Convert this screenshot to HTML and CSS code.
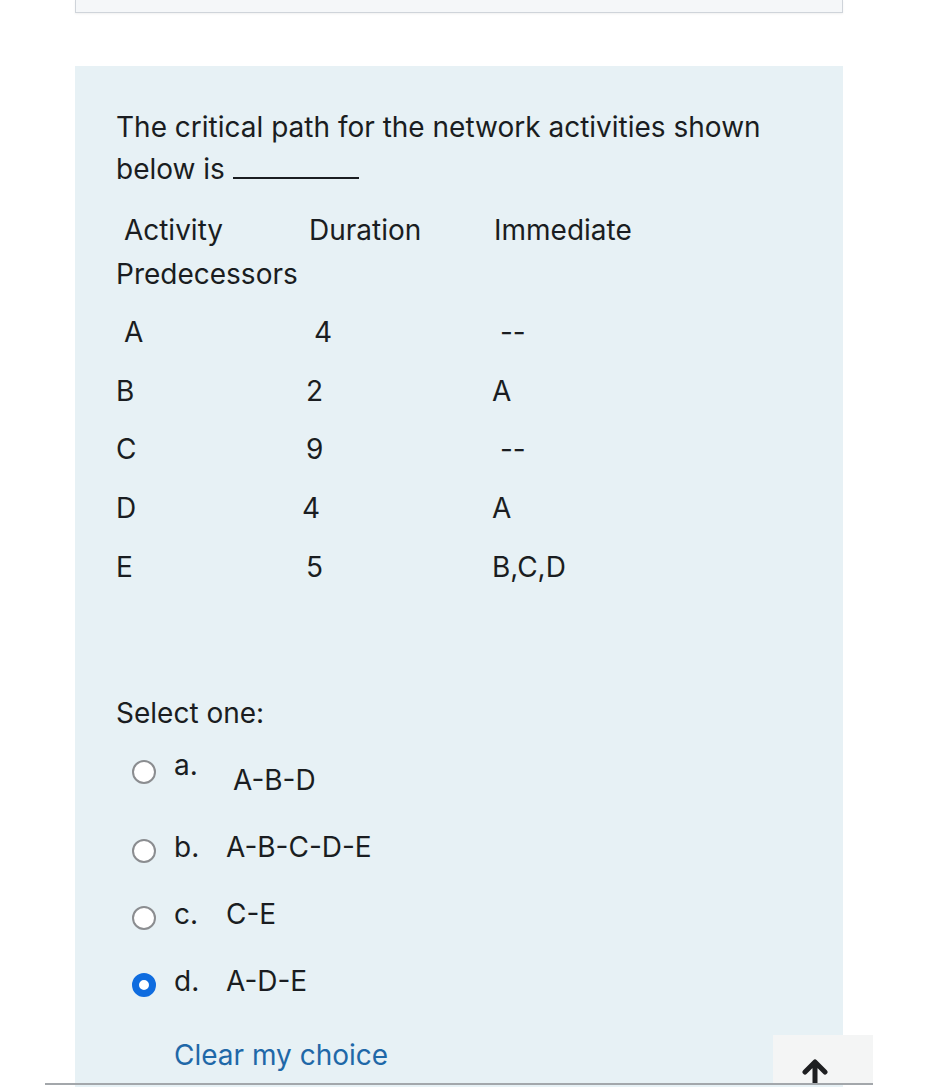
FILE: index.html
```html
<!DOCTYPE html>
<html lang="en">
<head>
    <meta charset="UTF-8">
    <meta name="viewport" content="width=device-width, initial-scale=1.0">
    <title>Quiz question</title>
    <link rel="stylesheet" href="styles.css">
</head>
<body>

    <div class="prev-card"></div>

    <div class="question">
        <p class="qtext">The critical path for the network activities shown below is <span class="blank"></span></p>

        <div class="table-head">
            <span class="col">&nbsp;Activity</span>
            <span class="col col-2">Duration</span>
            <span class="col col-3">Immediate</span>
        </div>
        <div class="table-head-wrap">Predecessors</div>

        <div class="table">
            <span>&nbsp;A</span><span class="num">&nbsp;4</span><span>&nbsp;--</span>
            <span>B</span><span class="num">2</span><span>A</span>
            <span>C</span><span class="num">9</span><span>&nbsp;--</span>
            <span>D</span><span>4</span><span>A</span>
            <span>E</span><span class="num">5</span><span>B,C,D</span>
        </div>

        <div class="prompt">Select one:</div>

        <div class="answers">
            <label class="option option-para">
                <span class="radio"></span>
                <span class="letter">a.</span>
                <span class="answer-text answer-para">A-B-D</span>
            </label>
            <label class="option">
                <span class="radio"></span>
                <span class="letter">b.</span>
                <span class="answer-text">A-B-C-D-E</span>
            </label>
            <label class="option">
                <span class="radio"></span>
                <span class="letter">c.</span>
                <span class="answer-text">C-E</span>
            </label>
            <label class="option">
                <span class="radio checked"></span>
                <span class="letter">d.</span>
                <span class="answer-text">A-D-E</span>
            </label>
        </div>

        <a class="clear-choice" href="#">Clear my choice</a>
    </div>

    <div class="bottom-rule"></div>
    <div class="back-to-top">
        <svg width="30" height="30" viewBox="0 0 30 30">
            <path d="M15 28 V6 M5 15 L15 5 L25 15" fill="none" stroke="#1e1f21" stroke-width="5" stroke-linecap="round" stroke-linejoin="round"/>
        </svg>
    </div>

</body>
</html>
```

FILE: styles.css
```css
body {
    margin: 0;
    background: #ffffff;
    font-family: Inter, "Noto Sans", sans-serif;
    font-size: 28px;
    color: #1a1d21;
    overflow: hidden;
}

.prev-card {
    width: 768px;
    height: 13px;
    margin-left: 75px;
    box-sizing: border-box;
    background: #f5f7f9;
    border: 1px solid #cfd4da;
    border-top: none;
    box-shadow: 0 1px 2px rgba(0, 0, 0, 0.06);
}

.question {
    width: 768px;
    margin: 53px 0 0 75px;
    box-sizing: border-box;
    padding: 41px 41px 80px;
    background: #e7f1f5;
}

.qtext {
    margin: 0;
    line-height: 41.6px;
    width: 670px;
}

.blank {
    display: inline-block;
    width: 126px;
    border-bottom: 2px solid #1a1d21;
    vertical-align: baseline;
}

.table-head {
    display: grid;
    grid-template-columns: 186px 190px auto;
    margin-top: 18px;
    line-height: 44px;
}

.table-head .col-2 {
    padding-left: 7px;
}

.table-head .col-3 {
    padding-left: 2px;
}

.table-head-wrap {
    line-height: 44px;
}

.table {
    display: grid;
    grid-template-columns: 186px 190px auto;
    margin-top: 7px;
    line-height: 58.6px;
}

.table .num {
    padding-left: 4px;
}

.prompt {
    margin-top: 99px;
    line-height: 36px;
}

.answers {
    margin-top: 16px;
    padding-left: 16px;
}

.option {
    display: flex;
    align-items: flex-start;
    line-height: 36px;
    margin-bottom: 31px;
}

.radio {
    width: 24px;
    height: 24px;
    box-sizing: border-box;
    margin-top: 9.5px;
    border: 2.5px solid #8b8d90;
    border-radius: 50%;
    background: #ffffff;
    flex-shrink: 0;
}

.option-para .radio {
    margin-top: 13px;
}

.radio.checked {
    border: 7.5px solid #0f6cdf;
}

.letter {
    margin-left: 18px;
    width: 52px;
}

.answer-para {
    margin-top: 15px;
    margin-left: 7px;
}

.clear-choice {
    display: block;
    margin: 38px 0 0 58px;
    line-height: 36px;
    color: #1f68a8;
    text-decoration: none;
}

.bottom-rule {
    position: absolute;
    left: 45px;
    top: 1083px;
    width: 828px;
    height: 2px;
    background: #a3a7ab;
}

.back-to-top {
    position: absolute;
    left: 773px;
    top: 1035px;
    width: 100px;
    height: 48px;
    box-sizing: border-box;
    padding-right: 16px;
    background: #f4f5f5;
    display: flex;
    justify-content: center;
    align-items: flex-end;
    overflow: hidden;
}

.back-to-top svg {
    margin-bottom: -4px;
}
```
